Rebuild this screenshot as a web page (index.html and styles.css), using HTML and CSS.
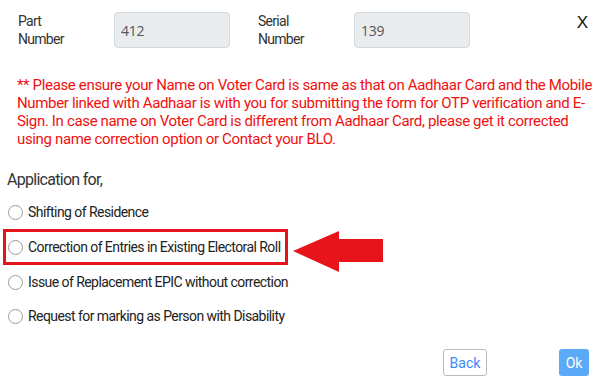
FILE: index.html
```html
<!DOCTYPE html>
<html lang="en">
<head>
    <meta charset="UTF-8">
    <meta name="viewport" content="width=device-width, initial-scale=1.0">
    <title>Application Form</title>
    <link rel="stylesheet" href="styles.css">
</head>
<body>
    <div class="dialog">
        <!-- Part / Serial -->
        <div class="top-row">
            <label class="field-label" for="partNo">Part<br>Number</label>
            <input type="text" id="partNo" class="readonly-field" value="412" readonly>
            <label class="field-label" for="serialNo">Serial<br>Number</label>
            <input type="text" id="serialNo" class="readonly-field" value="139" readonly>
            <span class="close">X</span>
        </div>

        <p class="notice">** Please ensure your Name on Voter Card is same as that on Aadhaar Card and the Mobile Number linked with Aadhaar is with you for submitting the form for OTP verification and E-Sign. In case name on Voter Card is different from Aadhaar Card, please get it corrected using name correction option or Contact your BLO.</p>

        <div class="app-title">Application for,</div>

        <div class="options">
            <label class="option"><span class="radio"></span>Shifting of Residence</label>
            <label class="option highlight"><span class="radio"></span>Correction of Entries in Existing Electoral Roll
                <svg class="arrow" width="94" height="46" viewBox="0 0 94 46">
                    <polygon points="2,23 48,3 48,11 92,11 92,34 48,34 48,44" fill="#e8141c"/>
                </svg>
            </label>
            <label class="option"><span class="radio"></span>Issue of Replacement EPIC without correction</label>
            <label class="option"><span class="radio"></span>Request for marking as Person with Disability</label>
        </div>

        <div class="footer">
            <button class="btn btn-back">Back</button>
            <button class="btn btn-ok">Ok</button>
        </div>
    </div>
</body>
</html>
```

FILE: styles.css
```css
* {
    margin: 0;
    padding: 0;
    box-sizing: border-box;
}

body {
    font-family: Roboto, "Liberation Sans", Arial, sans-serif;
    letter-spacing: -0.045em;
    background-color: #ffffff;
    width: 600px;
    height: 386px;
    overflow: hidden;
}

.dialog {
    display: flex;
    flex-direction: column;
}

.top-row {
    display: flex;
    align-items: center;
    padding: 12px 12px 0 18px;
}

.field-label {
    width: 96px;
    font-size: 14px;
    line-height: 18px;
    color: #333;
}

.readonly-field {
    width: 116px;
    height: 36px;
    padding: 0 6px;
    font-family: "Open Sans", Roboto, sans-serif;
    font-size: 14px;
    letter-spacing: -0.02em;
    color: #555;
    background-color: #e9ecef;
    border: 1px solid #d3d8dd;
    border-radius: 4px;
    margin-right: 28px;
}

.close {
    margin-left: auto;
    margin-top: -14px;
    font-family: "Liberation Sans", Arial, sans-serif;
    font-size: 17px;
    letter-spacing: 0;
    color: #111;
}

.notice {
    margin-top: 28px;
    padding: 0 0 0 17px;
    font-size: 15px;
    line-height: 18px;
    letter-spacing: -0.023em;
    color: #f01010;
}

.app-title {
    margin-top: 22px;
    padding-left: 7px;
    font-size: 16px;
    line-height: 20px;
    color: #333;
}

.options {
    display: flex;
    flex-direction: column;
    align-items: flex-start;
    margin-top: 5px;
}

.option {
    position: relative;
    display: flex;
    align-items: center;
    height: 34px;
    margin-left: 3px;
    padding: 0 8px 0 5px;
    font-size: 14px;
    letter-spacing: -0.04em;
    color: #222;
}

.option.highlight {
    outline: 3px solid #e3141b;
    outline-offset: -3px;
    height: 36px;
}

.radio {
    width: 15px;
    height: 15px;
    border: 1px solid #9a9a9a;
    border-radius: 50%;
    margin-right: 5px;
    flex-shrink: 0;
}

.arrow {
    position: absolute;
    left: calc(100% + 3px);
    top: -1px;
}

.footer {
    display: flex;
    justify-content: flex-end;
    gap: 72px;
    padding-right: 11px;
    margin-top: 16px;
}

.btn {
    height: 27px;
    font-family: Roboto, sans-serif;
    font-size: 14px;
    letter-spacing: 0;
    border-radius: 3px;
    cursor: pointer;
}

.btn-back {
    width: 44px;
    background-color: #fff;
    color: #3d8af7;
    border: 1px solid #bbb;
}

.btn-ok {
    width: 30px;
    background-color: #5aaaf8;
    color: #fff;
    border: none;
}
```
